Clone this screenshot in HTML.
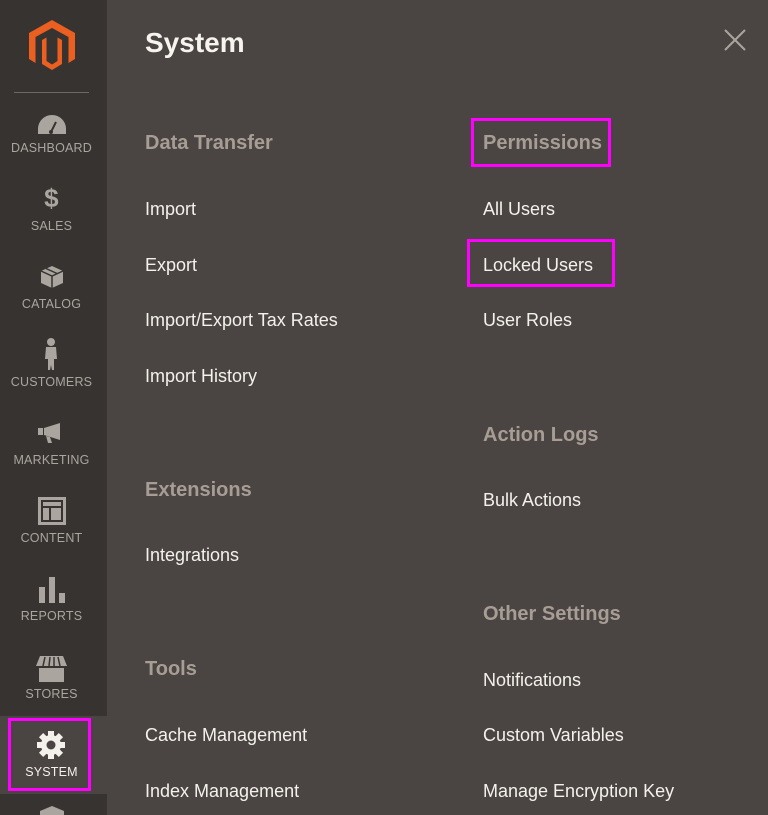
<!DOCTYPE html>
<html><head><meta charset="utf-8"><style>
*{margin:0;padding:0;box-sizing:border-box}
body{width:768px;height:815px;overflow:hidden;background:#4a4542;font-family:"Liberation Sans",sans-serif;position:relative}
.side{position:absolute;left:0;top:0;width:107px;height:815px;background:#373330}
.it{position:absolute;left:0;width:103px;text-align:center;color:#aaa59f;font-size:12.5px;letter-spacing:.2px}
.ic{position:absolute;left:0;width:103px;display:flex;justify-content:center}
.t{position:absolute;font-size:18px;color:#f4f1ec}
.h{position:absolute;font-size:20px;color:#a79d95;font-weight:bold}
.box{position:absolute;border:3px solid #ff00ff}
</style></head><body>
<div class="side">
<svg style="position:absolute;left:29px;top:20px" width="46" height="50" viewBox="0 0 46 50"><path fill="#eb5f20" d="M23 0L46 13V39L39.5 43V17L23 8L6.5 17V43L0 39V13Z"/><path fill="#eb5f20" d="M13 20L17.5 17.5V41L23 44.5L28.5 41V17.5L33 20V44L23 50L13 44Z"/></svg>
<div style="position:absolute;left:14px;top:92px;width:75px;height:1px;background:#6e6863"></div>
<svg style="position:absolute;left:37px;top:114px" width="30" height="21" viewBox="0 0 30 21"><path fill="#aaa59f" d="M15 1C7 1 1 7.5 1 15V20H29V15C29 7.5 23 1 15 1Z"/><path stroke="#373330" stroke-width="2" d="M14 18L19 8"/><circle cx="14" cy="18" r="2" fill="#373330"/></svg>
<div class="it" style="top:141px">DASHBOARD</div>
<div class="it" style="top:183px;font-size:26px;font-weight:bold">$</div>
<div class="it" style="top:219px">SALES</div>
<svg style="position:absolute;left:40px;top:265px" width="24" height="24" viewBox="0 0 24 24"><path fill="#aaa59f" d="M12 1L23 6V18L12 23L1 18V6Z"/><path stroke="#373330" stroke-width="1.5" fill="none" d="M1 6L12 11L23 6M12 11V23M6 3.5L17 8.5"/></svg>
<div class="it" style="top:297px">CATALOG</div>
<svg style="position:absolute;left:44px;top:338px" width="14" height="32" viewBox="0 0 14 32"><circle cx="7" cy="4" r="4" fill="#aaa59f"/><path fill="#aaa59f" d="M2 9H12L13 21H10L10 32H8L7 27L6 32H4L4 21H1Z"/></svg>
<div class="it" style="top:375px">CUSTOMERS</div>
<svg style="position:absolute;left:38px;top:423px" width="27" height="20" viewBox="0 0 27 20"><path fill="#aaa59f" d="M0 5H5V12H0ZM6 5L22 0V17L6 12ZM8 13L12 14L14 20H10Z"/></svg>
<div class="it" style="top:453px">MARKETING</div>
<svg style="position:absolute;left:38px;top:497px" width="28" height="28" viewBox="0 0 28 28"><path fill="none" stroke="#aaa59f" stroke-width="3" d="M1.5 1.5H26.5V26.5H1.5Z"/><path fill="#aaa59f" d="M5 5H23V9H5ZM5 11H11V23H5ZM13 11H23V23H13Z"/></svg>
<div class="it" style="top:531px">CONTENT</div>
<svg style="position:absolute;left:39px;top:577px" width="26" height="26" viewBox="0 0 26 26"><path fill="#aaa59f" d="M0 10H6V26H0ZM10 0H16V26H10ZM20 16H26V26H20Z"/></svg>
<div class="it" style="top:609px">REPORTS</div>
<svg style="position:absolute;left:36px;top:656px" width="31" height="26" viewBox="0 0 31 26"><path fill="#aaa59f" d="M4 0H27L31 10H0ZM3 12H28V26H3Z"/><path stroke="#373330" stroke-width="1.5" d="M9 1L7 10M14 1L13 10M18 1L18 10M22 1L24 10"/></svg>
<div class="it" style="top:687px">STORES</div>
<div style="position:absolute;left:0;top:716px;width:107px;height:78px;background:#4a4542"></div>
<div class="box" style="left:8px;top:718px;width:83px;height:73px"></div>
<svg style="position:absolute;left:37px;top:731px" width="28" height="28" viewBox="0 0 28 28"><g fill="#f4f1ec"><circle cx="14" cy="14" r="10"/><rect x="11" y="0" width="6" height="28"/><rect x="0" y="11" width="28" height="6"/><rect x="11" y="0" width="6" height="28" transform="rotate(45 14 14)"/><rect x="11" y="0" width="6" height="28" transform="rotate(-45 14 14)"/></g><circle cx="14" cy="14" r="4.5" fill="#4a4542"/></svg>
<div class="it" style="top:765px;color:#f4f1ec">SYSTEM</div>
<svg style="position:absolute;left:40px;top:806px" width="24" height="9" viewBox="0 0 24 9"><path fill="#aaa59f" d="M12 0L24 5V9H0V5Z"/></svg>
</div>
<div style="position:absolute;left:145px;top:27px;font-size:28px;font-weight:bold;color:#f7f4ef">System</div>
<svg style="position:absolute;left:724px;top:29px" width="22" height="22" viewBox="0 0 22 22"><path stroke="#aaa59f" stroke-width="2" d="M1 1L21 21M21 1L1 21"/></svg>
<div class="h" style="left:145px;top:132px">Data Transfer</div>
<div class="t" style="left:145px;top:199px">Import</div>
<div class="t" style="left:145px;top:255px">Export</div>
<div class="t" style="left:145px;top:310px">Import/Export Tax Rates</div>
<div class="t" style="left:145px;top:366px">Import History</div>
<div class="h" style="left:145px;top:479px">Extensions</div>
<div class="t" style="left:145px;top:545px">Integrations</div>
<div class="h" style="left:145px;top:658px">Tools</div>
<div class="t" style="left:145px;top:725px">Cache Management</div>
<div class="t" style="left:145px;top:781px">Index Management</div>
<div class="h" style="left:483px;top:132px">Permissions</div>
<div class="box" style="left:471px;top:118px;width:140px;height:49px"></div>
<div class="t" style="left:483px;top:199px">All Users</div>
<div class="t" style="left:483px;top:255px">Locked Users</div>
<div class="box" style="left:467px;top:239px;width:148px;height:48px"></div>
<div class="t" style="left:483px;top:310px">User Roles</div>
<div class="h" style="left:483px;top:424px">Action Logs</div>
<div class="t" style="left:483px;top:490px">Bulk Actions</div>
<div class="h" style="left:483px;top:603px">Other Settings</div>
<div class="t" style="left:483px;top:670px">Notifications</div>
<div class="t" style="left:483px;top:725px">Custom Variables</div>
<div class="t" style="left:483px;top:781px">Manage Encryption Key</div>
</body></html>
